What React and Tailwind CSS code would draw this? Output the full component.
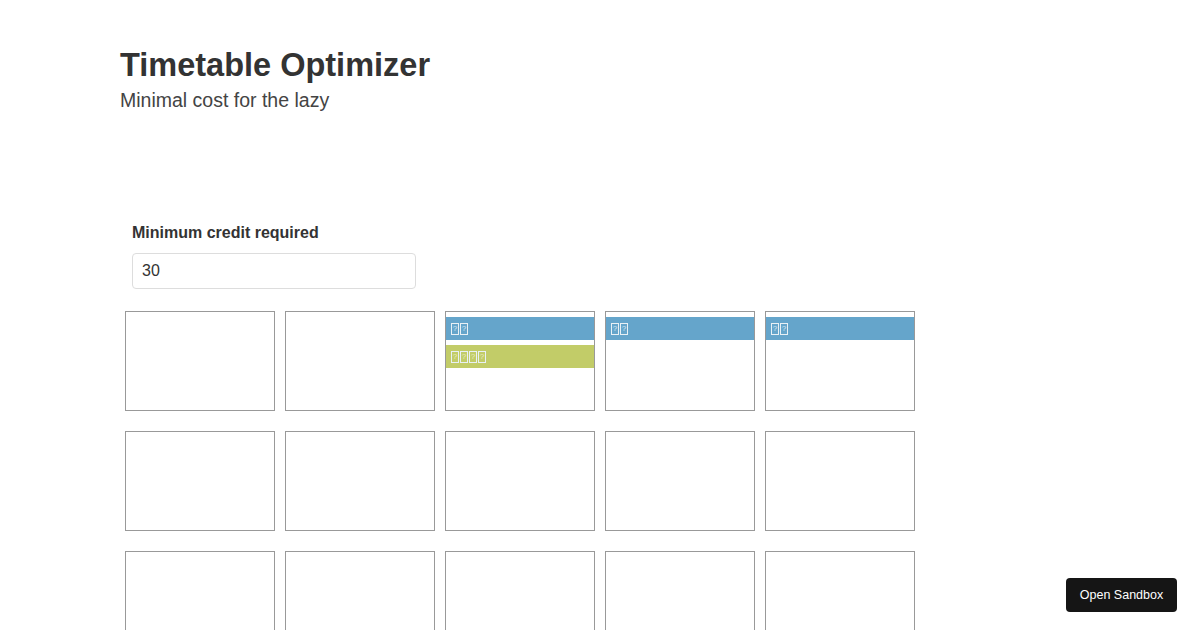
import React from "react";

function Tofu({ n, color }) {
  return (
    <span className="inline-flex gap-[1px] align-middle">
      {Array.from({ length: n }).map((_, i) => (
        <span
          key={i}
          className={`inline-flex h-[12px] w-[8px] items-center justify-center border border-[#e8f0f5] text-[8px] leading-none ${color}`}
        >
          ?
        </span>
      ))}
    </span>
  );
}

const cells = [
  [],
  [],
  [
    { n: 2, bg: "bg-[#65a5cb]", c: "text-[#dbe8f2]" },
    { n: 4, bg: "bg-[#c2cc68]", c: "text-[#e9ecc0]" },
  ],
  [{ n: 2, bg: "bg-[#65a5cb]", c: "text-[#dbe8f2]" }],
  [{ n: 2, bg: "bg-[#65a5cb]", c: "text-[#dbe8f2]" }],
];

function Cell({ bars = [] }) {
  return (
    <div className="flex h-[100px] w-[150px] flex-col gap-[5px] border border-[#999] pt-[5px]">
      {bars.map((b, i) => (
        <div key={i} className={`flex h-[23px] items-center px-[5px] ${b.bg}`}>
          <Tofu n={b.n} color={b.c} />
        </div>
      ))}
    </div>
  );
}

export default function App() {
  const rows = [cells, [[], [], [], [], []], [[], [], [], [], []]];
  return (
    <div className="relative h-[630px] overflow-hidden bg-white font-['Liberation_Sans',Arial,sans-serif] text-[#333]">
      <header className="pl-[120px] pt-[48px]">
        <h1 className="text-[32.5px] font-bold leading-[35px]">Timetable Optimizer</h1>
        <p className="mt-[7px] text-[19.5px] leading-[21px] text-[#444]">Minimal cost for the lazy</p>
      </header>
      <div className="pl-[125px] pt-[112px]">
        <div className="pl-[7px]">
          <label className="block text-[16px] font-bold leading-[20px]">Minimum credit required</label>
          <input
            defaultValue="30"
            className="mt-[10px] h-[36px] w-[284px] rounded-[4px] border border-[#ddd] px-[9px] text-[16px] text-[#333] outline-none"
          />
        </div>
        <div className="mt-[22px] flex flex-col gap-[20px]">
          {rows.map((row, r) => (
            <div key={r} className="flex gap-[10px]">
              {row.map((bars, c) => (
                <Cell key={c} bars={bars} />
              ))}
            </div>
          ))}
        </div>
      </div>
      <button className="absolute bottom-[18px] right-[23px] h-[34px] w-[111px] rounded-[4px] bg-[#151515] text-[12.5px] text-white">
        Open Sandbox
      </button>
    </div>
  );
}
